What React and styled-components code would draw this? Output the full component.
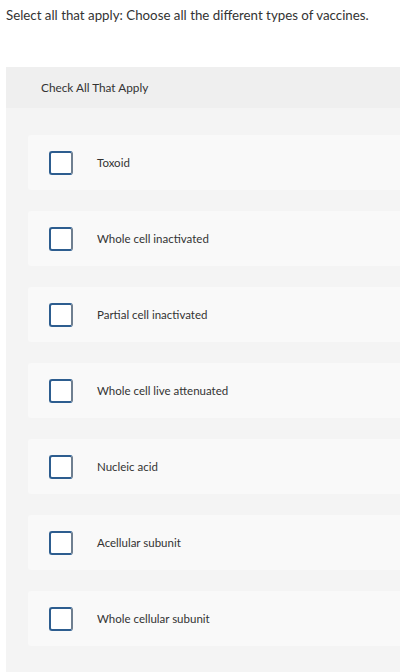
import React from "react";
import styled, { createGlobalStyle } from "styled-components";

const Global = createGlobalStyle`
  html, body { margin: 0; padding: 0; background: #fff; }
  body { font-family: Lato, "Open Sans", Arial, sans-serif; }
`;

const Page = styled.div`
  width: 400px;
  height: 672px;
  overflow: hidden;
  padding: 0 0 0 6px;
  box-sizing: border-box;
`;

const Question = styled.p`
  margin: 0;
  padding-top: 7px;
  height: 67px;
  box-sizing: border-box;
  font-size: 13.3px;
  line-height: 16px;
  color: #333;
`;

const Panel = styled.div`
  width: 420px;
  background: #f4f4f4;
  display: flex;
  flex-direction: column;
  min-height: 610px;
`;

const Header = styled.div`
  height: 41px;
  background: #efefef;
  display: flex;
  align-items: center;
  padding-left: 35px;
  font-size: 11.8px;
  color: #333;
`;

const List = styled.div`
  display: flex;
  flex-direction: column;
  gap: 21px;
  padding: 27px 0 0 22px;
`;

const Card = styled.label`
  height: 55px;
  background: #f9f9f9;
  border-radius: 3px 0 0 3px;
  display: flex;
  align-items: center;
  padding-left: 21px;
  gap: 24px;
  font-size: 11.5px;
  color: #333;
`;

const Box = styled.span`
  width: 24px;
  height: 24px;
  box-sizing: border-box;
  border: 2px solid #2d5d8f;
  border-right-color: #6f7f90;
  border-radius: 3px;
  background: #fff;
  flex: none;
`;

const options = [
  "Toxoid",
  "Whole cell inactivated",
  "Partial cell inactivated",
  "Whole cell live attenuated",
  "Nucleic acid",
  "Acellular subunit",
  "Whole cellular subunit",
];

export default function App() {
  return (
    <Page>
      <Global />
      <Question>Select all that apply: Choose all the different types of vaccines.</Question>
      <Panel>
        <Header>Check All That Apply</Header>
        <List>
          {options.map((o) => (
            <Card key={o}>
              <Box />
              <span>{o}</span>
            </Card>
          ))}
        </List>
      </Panel>
    </Page>
  );
}
